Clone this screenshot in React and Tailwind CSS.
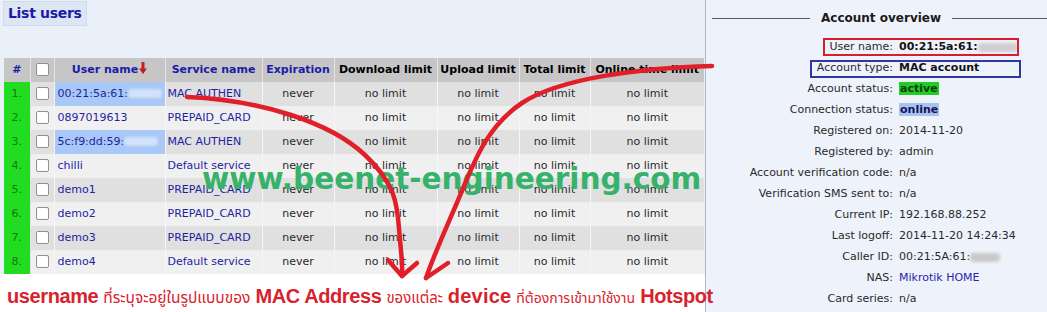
import React from 'react';

const users = [
  { n: 1, name: '00:21:5a:61:', blur: true, service: 'MAC AUTHEN' },
  { n: 2, name: '0897019613', service: 'PREPAID_CARD' },
  { n: 3, name: '5c:f9:dd:59:', blur: true, service: 'MAC AUTHEN' },
  { n: 4, name: 'chilli', service: 'Default service' },
  { n: 5, name: 'demo1', service: 'PREPAID_CARD' },
  { n: 6, name: 'demo2', service: 'PREPAID_CARD' },
  { n: 7, name: 'demo3', service: 'PREPAID_CARD' },
  { n: 8, name: 'demo4', service: 'Default service' },
];

function Check() {
  return <span className="inline-block w-[13px] h-[13px] bg-white border border-[#8f8f8f] rounded-[2px] align-middle" />;
}

function Blur({ w = 'w-[34px]', color = 'bg-[#d3e2fb]' }) {
  return <span className={`inline-block ${w} h-[9px] ${color} blur-[1.5px] rounded-sm align-middle`} />;
}

function SortArrow() {
  return (
    <svg width="8" height="12" viewBox="0 0 8 12" className="inline-block align-[-1px] ml-[1px]">
      <rect x="2.5" y="0" width="3" height="7" fill="#c41d1d" />
      <path d="M0 6.5 L8 6.5 L4 12 Z" fill="#c41d1d" />
    </svg>
  );
}

const info = [
  ['Connection status:', <span className="font-bold bg-[#a9c1ee] text-[#14145a] px-[1px]">online</span>],
  ['Registered on:', '2014-11-20'],
  ['Registered by:', 'admin'],
  ['Account verification code:', 'n/a'],
  ['Verification SMS sent to:', 'n/a'],
  ['Current IP:', '192.168.88.252'],
  ['Last logoff:', '2014-11-20 14:24:34'],
  ['Caller ID:', <span>00:21:5A:61:<Blur w="w-[30px]" color="bg-[#c9c9c9]" /></span>],
  ['NAS:', <span className="text-[#2626a8]">Mikrotik HOME</span>],
  ['Card series:', 'n/a'],
];

export default function App() {
  return (
    <div className="relative w-[1047px] h-[312px] overflow-hidden flex font-['DejaVu_Sans',sans-serif] text-[11px] text-[#2a2a2a]">
      {/* left: user list */}
      <div className="w-[705px] flex flex-col bg-white">
        <div className="h-[58px] bg-[#e9f0fa] pl-[3px] pt-[1px]">
          <div className="inline-flex items-center h-[25px] px-[4px] bg-[#dde6f3] border border-[#cfdaea] text-[#1b1ba8] font-bold text-[14px] tracking-[-0.3px]">
            List users
          </div>
        </div>
        <div className="bg-[#e9f0fa] pl-[4px]">
          <table className="table-fixed w-[700px] border-collapse">
            <colgroup>
              <col className="w-[26px]" />
              <col className="w-[24px]" />
              <col className="w-[111px]" />
              <col className="w-[97px]" />
              <col className="w-[72px]" />
              <col className="w-[103px]" />
              <col className="w-[82px]" />
              <col className="w-[71px]" />
              <col className="w-[114px]" />
            </colgroup>
            <thead>
              <tr className="h-[24px] bg-[#c6c6c6] font-bold text-center whitespace-nowrap">
                <th className="text-[#1b1ba8] border-r border-[#e4e4e4]">#</th>
                <th className="border-r border-[#e4e4e4]"><Check /></th>
                <th className="text-[#1b1ba8] border-r border-[#e4e4e4]">User name<SortArrow /></th>
                <th className="text-[#1b1ba8] border-r border-[#e4e4e4]">Service name</th>
                <th className="text-[#1b1ba8] border-r border-[#e4e4e4]">Expiration</th>
                <th className="text-black border-r border-[#e4e4e4]">Download limit</th>
                <th className="text-black border-r border-[#e4e4e4]">Upload limit</th>
                <th className="text-black border-r border-[#e4e4e4]">Total limit</th>
                <th className="text-black overflow-hidden">Online time limit</th>
              </tr>
            </thead>
            <tbody>
              {users.map(u => (
                <tr key={u.n} className={`h-[24px] whitespace-nowrap ${u.n % 2 ? 'bg-[#e0e0e0]' : 'bg-[#f0f0f0]'}`}>
                  <td className="bg-[#22dc22] text-[#127a12] text-center border-r border-[#e4e4e4]">{u.n}.</td>
                  <td className="text-center border-r border-[#f6f6f6]"><Check /></td>
                  <td className={`pl-[3px] text-[#1f1fa0] border-r border-[#f6f6f6] overflow-hidden ${u.blur ? 'bg-[#a8c8f7]' : ''}`}>
                    {u.name}{u.blur && <Blur />}
                  </td>
                  <td className="pl-[2px] text-[#1f1fa0] border-r border-[#f6f6f6]">{u.service}</td>
                  <td className="text-center border-r border-[#f6f6f6]">never</td>
                  <td className="text-center border-r border-[#f6f6f6]">no limit</td>
                  <td className="text-center border-r border-[#f6f6f6]">no limit</td>
                  <td className="text-center border-r border-[#f6f6f6]">no limit</td>
                  <td className="text-center">no limit</td>
                </tr>
              ))}
            </tbody>
          </table>
        </div>
        <div className="relative z-10 h-[38px] pl-[7px] pt-[10px] flex items-baseline gap-[5px] whitespace-nowrap text-[#d7232d] font-['Liberation_Sans','Noto_Sans_Thai',sans-serif] leading-[24px]">
          <span className="font-bold text-[20px] tracking-[-0.4px]">username</span>
          <span className="text-[15.5px]">ที่ระบุจะอยู่ในรูปแบบของ</span>
          <span className="font-bold text-[20px] tracking-[-0.4px]">MAC Address</span>
          <span className="text-[15px]">ของแต่ละ</span>
          <span className="font-bold text-[20px] tracking-[0.2px]">device</span>
          <span className="text-[14px]">ที่ต้องการเข้ามาใช้งาน</span>
          <span className="font-bold text-[20px] tracking-[-0.4px]">Hotspot</span>
        </div>
      </div>

      {/* right: account overview */}
      <div className="relative flex-1 bg-[#eef2fa] border-l border-[#a9b8cd] pt-[10px]">
        <div className="flex items-center h-[16px]">
          <div className="ml-[6px] w-[98px] h-px bg-[#5a5a5a]" />
          <div className="px-[11px] font-bold text-[12px] text-[#1a1a1a]">Account overview</div>
          <div className="flex-1 h-px bg-[#5a5a5a]" />
        </div>
        <div className="mt-[11px] grid grid-cols-[187px_1fr] auto-rows-[21px] items-center gap-x-[6px] whitespace-nowrap">
          <div className="text-right">User name:</div>
          <div className="font-bold text-[#141414]">00:21:5a:61:<Blur w="w-[40px]" color="bg-[#cfcfcf]" /></div>
          <div className="text-right">Account type:</div>
          <div className="font-bold text-[#141414]">MAC account</div>
          <div className="text-right">Account status:</div>
          <div><span className="font-bold bg-[#22cc22] text-[#0f3d0f] px-[1px]">active</span></div>
          {info.map(([k, v]) => (
            <React.Fragment key={k}>
              <div className="text-right">{k}</div>
              <div>{v}</div>
            </React.Fragment>
          ))}
        </div>
        {/* annotation boxes */}
        <div className="absolute left-[117px] top-[38px] w-[196px] h-[18px] border-2 border-[#d81f30]" />
        <div className="absolute left-[104px] top-[60px] w-[211px] h-[18px] border-2 border-[#3136a0]" />
      </div>

      {/* watermark */}
      <div className="absolute left-[202px] top-[159px] font-['DejaVu_Sans',sans-serif] font-bold text-[29.5px] leading-[40px] text-[#37b26b] whitespace-nowrap pointer-events-none">
        www.beenet-engineering.com
      </div>

      {/* red arrows */}
      <svg className="absolute left-0 top-0 pointer-events-none" width="1047" height="312" viewBox="0 0 1047 312">
        <g fill="none" stroke="#e01f2a" strokeWidth="4.5" strokeLinecap="round" strokeLinejoin="round">
          <path d="M187 97 C260 100 330 122 365 155 S397 210 400 240 S402 262 402 276" />
          <path d="M388 260 L402 276 L417 263" />
          <path d="M712 66 C640 68 560 78 522 103 S472 168 456 205 S434 255 426 278" />
          <path d="M426 278 L448 263" />
        </g>
      </svg>
    </div>
  );
}
